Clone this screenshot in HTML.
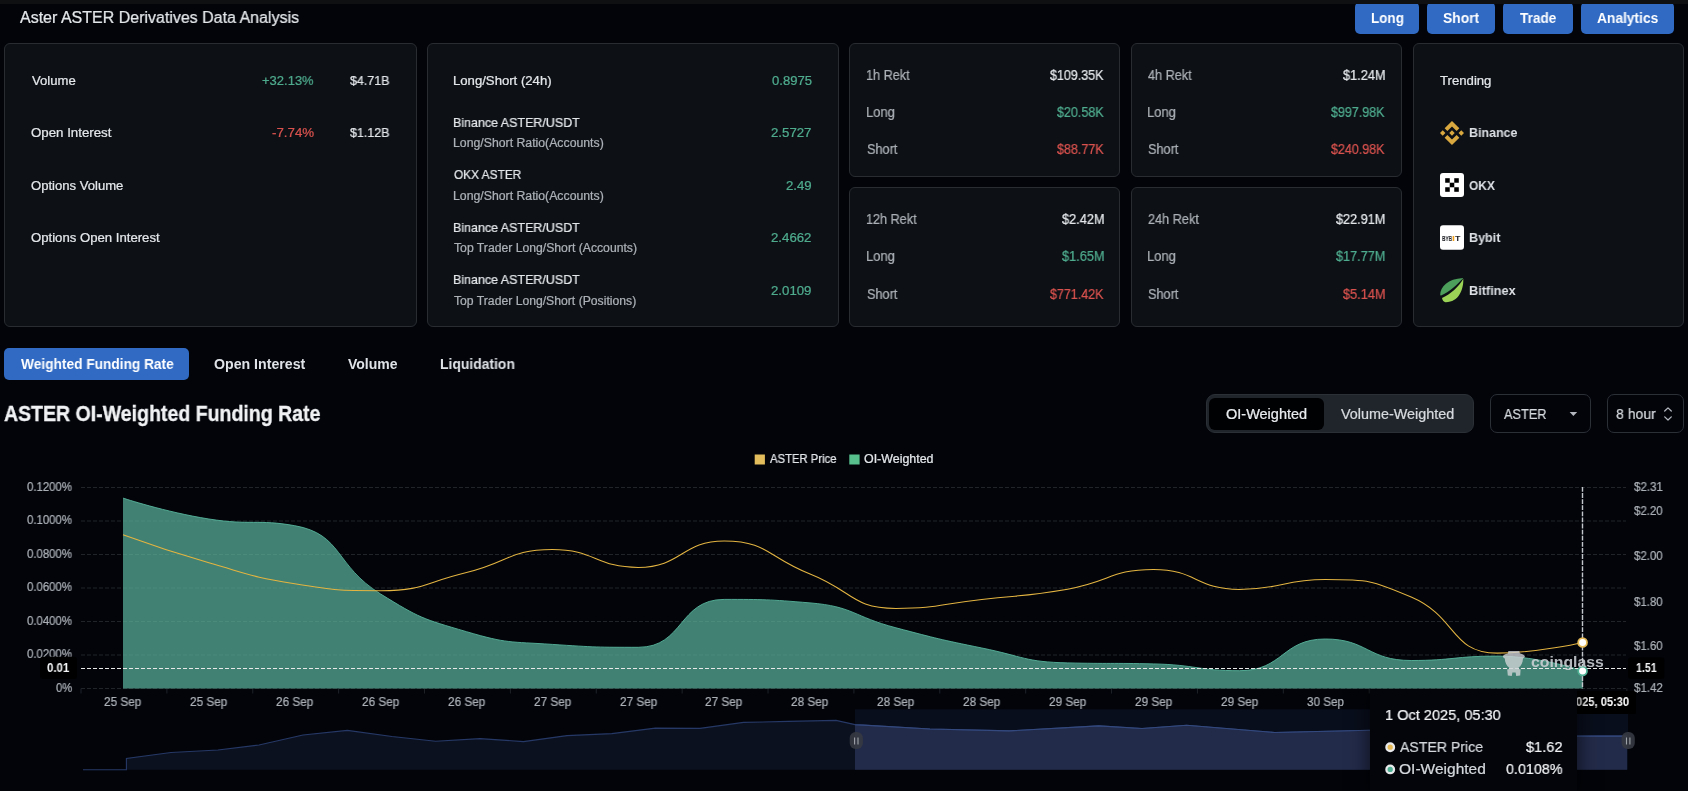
<!DOCTYPE html>
<html lang="en"><head><meta charset="utf-8"><title>Aster ASTER Derivatives Data Analysis</title>
<style>
html,body{margin:0;padding:0;background:#02040a;}
body{width:1688px;height:791px;position:relative;overflow:hidden;font-family:"Liberation Sans",sans-serif;}
.t{position:absolute;line-height:1;white-space:nowrap;will-change:transform;transform-origin:0 50%;}
.topbar{position:absolute;left:0;top:0;width:1688px;height:4px;background:#0f1011;z-index:5;}
.card{position:absolute;box-sizing:border-box;background:#0d1116;border:1px solid #292d32;border-radius:6px;}
.btn{position:absolute;top:2px;height:32px;background:#306ac3;border-radius:5px;}
.tab{position:absolute;left:4px;top:348px;width:185px;height:32px;background:#306ac3;border-radius:5px;}
.seg{position:absolute;left:1206px;top:394px;width:268px;height:39px;box-sizing:border-box;background:#20252c;border:1px solid #2b3037;border-radius:9px;}
.segon{position:absolute;left:1209px;top:398px;width:115px;height:32px;background:#000102;border-radius:6px;}
.sel{position:absolute;top:394px;height:39px;box-sizing:border-box;border:1px solid #2b3036;border-radius:7px;}
svg{position:absolute;left:0;top:0;}
.tip{position:absolute;left:1370px;top:689.5px;width:207px;height:102px;background:#03050b;box-shadow:0 0 16px 4px rgba(0,0,0,.5);clip-path:inset(0 -40px -40px -40px);}
</style></head><body>
<div class="topbar"></div>
<div class="btn" style="left:1355px;width:64px"></div>
<div class="btn" style="left:1427px;width:68px"></div>
<div class="btn" style="left:1503px;width:70px"></div>
<div class="btn" style="left:1581px;width:93px"></div>

<div class="card" style="left:4px;top:43px;width:413px;height:284px"></div>
<div class="card" style="left:427px;top:43px;width:412px;height:284px"></div>
<div class="card" style="left:849px;top:43px;width:271px;height:134px"></div>
<div class="card" style="left:849px;top:187px;width:271px;height:140px"></div>
<div class="card" style="left:1131px;top:43px;width:271px;height:134px"></div>
<div class="card" style="left:1131px;top:187px;width:271px;height:140px"></div>
<div class="card" style="left:1413px;top:43px;width:271px;height:284px"></div>

<div class="tab"></div>
<div class="seg"></div><div class="segon"></div>
<div class="sel" style="left:1490px;width:101px"></div>
<div class="sel" style="left:1607px;width:77px"></div>

<span class="t" style="left:26.76px;top:481px;transform:scaleX(0.9476);font-size:12px;color:#acb1b7;-webkit-text-stroke:0.24px;">0.1200%</span>
<span class="t" style="left:26.76px;top:514px;transform:scaleX(0.9476);font-size:12px;color:#acb1b7;-webkit-text-stroke:0.24px;">0.1000%</span>
<span class="t" style="left:26.76px;top:548px;transform:scaleX(0.9476);font-size:12px;color:#acb1b7;-webkit-text-stroke:0.24px;">0.0800%</span>
<span class="t" style="left:26.76px;top:581px;transform:scaleX(0.9476);font-size:12px;color:#acb1b7;-webkit-text-stroke:0.24px;">0.0600%</span>
<span class="t" style="left:26.76px;top:615px;transform:scaleX(0.9476);font-size:12px;color:#acb1b7;-webkit-text-stroke:0.24px;">0.0400%</span>
<span class="t" style="left:26.76px;top:648px;transform:scaleX(0.9476);font-size:12px;color:#acb1b7;-webkit-text-stroke:0.24px;">0.0200%</span>
<svg width="1688" height="791" viewBox="0 0 1688 791">

<g transform="translate(1440,121)" fill="#d9a93f">
<path d="M16.624 13.9202l2.7175 2.7154-7.353 7.353-7.353-7.352 2.7175-2.7164 4.6355 4.6595 4.6356-4.6595zm4.6366-4.6366L24 12l-2.7154 2.7164L18.5682 12l2.6924-2.7164zm-9.272.001l2.7163 2.6914-2.7164 2.7174v-.001L9.2721 12l2.7164-2.7154zm-9.2722-.001L5.4088 12l-2.6914 2.6924L0 12l2.7164-2.7164zM11.9885.0115l7.353 7.329-2.7174 2.7154-4.6356-4.6356-4.6355 4.6595-2.7174-2.7154 7.353-7.353z"/>
</g>
<g transform="translate(1440,173)">
<rect width="24" height="24" rx="3" fill="#ffffff"/>
<g fill="#000"><rect x="5.2" y="5.2" width="4.55" height="4.55"/><rect x="14.25" y="5.2" width="4.55" height="4.55"/><rect x="9.72" y="9.72" width="4.56" height="4.56"/><rect x="5.2" y="14.25" width="4.55" height="4.55"/><rect x="14.25" y="14.25" width="4.55" height="4.55"/></g>
</g>
<g transform="translate(1440,225.3)">
<rect width="24" height="24.4" rx="3" fill="#ffffff"/>
</g>
<g transform="translate(1440,277.8)">
<path d="M0.2,17 C0.2,9 8,0.9 22.9,0.1 C23.1,0.1 23.1,0.4 22.9,0.6 C17,6.8 9.5,14 1,17.7 C0.6,17.8 0.2,17.5 0.2,17 Z" fill="#4c9f5b"/>
<path d="M2,20.2 C10,17 18.8,9 23.3,1 C23.7,12 18.6,24.6 5.5,24.4 C3.8,24.3 2.5,22.8 2,20.2 Z" fill="#9bd357"/>
</g>

<path d="M1569.6,411.9 L1577.2,411.9 L1573.4,415.9 Z" fill="#b4b8be"/>
<path d="M1664.7,411 L1668,407.9 L1671.3,411 M1664.7,416.9 L1668,420 L1671.3,416.9" fill="none" stroke="#b4b8be" stroke-width="1.3" stroke-linecap="round" stroke-linejoin="round"/>
<rect x="754.7" y="454.5" width="10.2" height="10" fill="#e3bc5b"/>
<rect x="849.3" y="454.5" width="10.3" height="10" fill="#57c08d"/>
<line x1="81" y1="487.5" x2="1626" y2="487.5" stroke="#212529" stroke-width="1" stroke-dasharray="4 2"/>
<line x1="81" y1="521.0" x2="1626" y2="521.0" stroke="#212529" stroke-width="1" stroke-dasharray="4 2"/>
<line x1="81" y1="554.5" x2="1626" y2="554.5" stroke="#212529" stroke-width="1" stroke-dasharray="4 2"/>
<line x1="81" y1="588.0" x2="1626" y2="588.0" stroke="#212529" stroke-width="1" stroke-dasharray="4 2"/>
<line x1="81" y1="621.5" x2="1626" y2="621.5" stroke="#212529" stroke-width="1" stroke-dasharray="4 2"/>
<line x1="81" y1="655.0" x2="1626" y2="655.0" stroke="#212529" stroke-width="1" stroke-dasharray="4 2"/>
<line x1="81" y1="688.5" x2="1626" y2="688.5" stroke="#212529" stroke-width="1" stroke-dasharray="4 2"/>
<line x1="81.00" y1="688.5" x2="81.00" y2="693.5" stroke="#1f2328" stroke-width="1"/>
<line x1="166.88" y1="688.5" x2="166.88" y2="693.5" stroke="#1f2328" stroke-width="1"/>
<line x1="252.76" y1="688.5" x2="252.76" y2="693.5" stroke="#1f2328" stroke-width="1"/>
<line x1="338.64" y1="688.5" x2="338.64" y2="693.5" stroke="#1f2328" stroke-width="1"/>
<line x1="424.52" y1="688.5" x2="424.52" y2="693.5" stroke="#1f2328" stroke-width="1"/>
<line x1="510.40" y1="688.5" x2="510.40" y2="693.5" stroke="#1f2328" stroke-width="1"/>
<line x1="596.28" y1="688.5" x2="596.28" y2="693.5" stroke="#1f2328" stroke-width="1"/>
<line x1="682.16" y1="688.5" x2="682.16" y2="693.5" stroke="#1f2328" stroke-width="1"/>
<line x1="768.04" y1="688.5" x2="768.04" y2="693.5" stroke="#1f2328" stroke-width="1"/>
<line x1="853.92" y1="688.5" x2="853.92" y2="693.5" stroke="#1f2328" stroke-width="1"/>
<line x1="939.80" y1="688.5" x2="939.80" y2="693.5" stroke="#1f2328" stroke-width="1"/>
<line x1="1025.68" y1="688.5" x2="1025.68" y2="693.5" stroke="#1f2328" stroke-width="1"/>
<line x1="1111.56" y1="688.5" x2="1111.56" y2="693.5" stroke="#1f2328" stroke-width="1"/>
<line x1="1197.44" y1="688.5" x2="1197.44" y2="693.5" stroke="#1f2328" stroke-width="1"/>
<line x1="1283.32" y1="688.5" x2="1283.32" y2="693.5" stroke="#1f2328" stroke-width="1"/>
<line x1="1369.20" y1="688.5" x2="1369.20" y2="693.5" stroke="#1f2328" stroke-width="1"/>
<line x1="1455.08" y1="688.5" x2="1455.08" y2="693.5" stroke="#1f2328" stroke-width="1"/>
<line x1="1540.96" y1="688.5" x2="1540.96" y2="693.5" stroke="#1f2328" stroke-width="1"/>
<line x1="1626.84" y1="688.5" x2="1626.84" y2="693.5" stroke="#1f2328" stroke-width="1"/>
<path d="M123.00,498.10 C123.00,498.10 165.39,512.13 208.88,519.00 C251.27,525.70 256.99,519.00 294.76,525.70 C342.87,534.23 334.34,565.42 380.64,594.00 C420.22,618.42 421.92,618.61 466.52,631.70 C507.80,643.81 509.24,641.47 552.40,644.40 C595.12,647.30 598.23,647.30 638.28,647.30 C684.11,647.30 678.33,599.40 724.16,599.40 C764.21,599.40 767.95,599.40 810.04,602.90 C853.83,606.54 852.69,616.45 895.92,627.80 C938.57,639.00 938.60,639.17 981.80,648.00 C1024.48,656.72 1024.42,661.89 1067.68,662.90 C1110.30,663.90 1110.69,662.90 1153.56,663.90 C1196.57,664.90 1197.80,670.70 1239.44,670.70 C1283.68,670.70 1281.66,639.00 1325.32,639.00 C1367.54,639.00 1367.64,660.50 1411.20,660.50 C1453.52,660.50 1454.43,656.10 1497.08,656.10 C1540.31,656.10 1582.96,671.00 1582.96,671.00 L1582.96,688.5 L123.00,688.5 Z" fill="#5cb79f" fill-opacity="0.7"/>
<path d="M123.00,498.10 C123.00,498.10 165.39,512.13 208.88,519.00 C251.27,525.70 256.99,519.00 294.76,525.70 C342.87,534.23 334.34,565.42 380.64,594.00 C420.22,618.42 421.92,618.61 466.52,631.70 C507.80,643.81 509.24,641.47 552.40,644.40 C595.12,647.30 598.23,647.30 638.28,647.30 C684.11,647.30 678.33,599.40 724.16,599.40 C764.21,599.40 767.95,599.40 810.04,602.90 C853.83,606.54 852.69,616.45 895.92,627.80 C938.57,639.00 938.60,639.17 981.80,648.00 C1024.48,656.72 1024.42,661.89 1067.68,662.90 C1110.30,663.90 1110.69,662.90 1153.56,663.90 C1196.57,664.90 1197.80,670.70 1239.44,670.70 C1283.68,670.70 1281.66,639.00 1325.32,639.00 C1367.54,639.00 1367.64,660.50 1411.20,660.50 C1453.52,660.50 1454.43,656.10 1497.08,656.10 C1540.31,656.10 1582.96,671.00 1582.96,671.00" fill="none" stroke="#56b59c" stroke-opacity="0.9" stroke-width="1"/>
<path d="M123.00,534.80 C123.00,534.80 165.48,550.42 208.88,562.80 C251.36,574.92 251.27,576.73 294.76,583.80 C337.15,590.68 338.10,590.70 380.64,590.70 C423.98,590.70 423.86,582.76 466.52,572.50 C509.74,562.11 509.17,549.40 552.40,549.40 C595.05,549.40 595.85,567.40 638.28,567.40 C681.73,567.40 681.73,540.90 724.16,540.90 C767.61,540.90 767.21,557.17 810.04,574.00 C853.09,590.92 851.50,608.40 895.92,608.40 C937.38,608.40 938.89,604.20 981.80,599.40 C1024.77,594.60 1025.14,596.61 1067.68,589.20 C1111.02,581.66 1110.63,569.50 1153.56,569.50 C1196.51,569.50 1196.08,589.40 1239.44,589.40 C1281.96,589.40 1282.68,579.50 1325.32,579.50 C1368.56,579.50 1371.63,580.04 1411.20,597.00 C1457.51,616.84 1450.50,653.10 1497.08,653.10 C1536.38,653.10 1582.96,642.50 1582.96,642.50" fill="none" stroke="#e3b441" stroke-width="1.05"/>
<line x1="81" y1="668.5" x2="1626" y2="668.5" stroke="#e8e8e8" stroke-width="1" stroke-dasharray="4 2"/>
<rect x="40" y="656.7" width="37" height="22.3" rx="3" fill="#000000"/>
<rect x="1628" y="657.3" width="36.5" height="21.6" rx="3" fill="#000000"/>
<path d="M83.0,769.7 L126.4,769.7 L126.4,758.5 L171.0,752.5 L218.0,750.0 L259.0,745.0 L303.0,735.0 L347.4,730.4 L392.0,736.5 L435.7,741.3 L480.0,738.6 L523.4,741.6 L567.0,735.6 L611.8,733.6 L655.3,728.1 L700.0,728.4 L743.6,722.4 L788.4,721.4 L836.0,720.4 L855.0,724.6 L930.0,729.0 L1009.2,730.9 L1098.8,725.9 L1142.0,728.5 L1186.7,725.2 L1274.6,732.5 L1370.0,730.2 L1450.0,733.0 L1540.0,735.5 L1577.0,736.1 L1627.0,736.1 L1627,769.7 L83,769.7 Z" fill="#0c1120"/>
<clipPath id="cw"><rect x="855" y="700" width="773" height="80"/></clipPath>
<rect x="855" y="709.3" width="773" height="60.4" fill="#090e1c"/>
<path d="M83.0,769.7 L126.4,769.7 L126.4,758.5 L171.0,752.5 L218.0,750.0 L259.0,745.0 L303.0,735.0 L347.4,730.4 L392.0,736.5 L435.7,741.3 L480.0,738.6 L523.4,741.6 L567.0,735.6 L611.8,733.6 L655.3,728.1 L700.0,728.4 L743.6,722.4 L788.4,721.4 L836.0,720.4 L855.0,724.6 L930.0,729.0 L1009.2,730.9 L1098.8,725.9 L1142.0,728.5 L1186.7,725.2 L1274.6,732.5 L1370.0,730.2 L1450.0,733.0 L1540.0,735.5 L1577.0,736.1 L1627.0,736.1 L1627,769.7 L83,769.7 Z" fill="#232b4a" clip-path="url(#cw)"/>
<path d="M83.0,769.7 L126.4,769.7 L126.4,758.5 L171.0,752.5 L218.0,750.0 L259.0,745.0 L303.0,735.0 L347.4,730.4 L392.0,736.5 L435.7,741.3 L480.0,738.6 L523.4,741.6 L567.0,735.6 L611.8,733.6 L655.3,728.1 L700.0,728.4 L743.6,722.4 L788.4,721.4 L836.0,720.4 L855.0,724.6 L930.0,729.0 L1009.2,730.9 L1098.8,725.9 L1142.0,728.5 L1186.7,725.2 L1274.6,732.5 L1370.0,730.2 L1450.0,733.0 L1540.0,735.5 L1577.0,736.1 L1627.0,736.1" fill="none" stroke="#263966" stroke-width="1.1"/>
<path d="M83.0,769.7 L126.4,769.7 L126.4,758.5 L171.0,752.5 L218.0,750.0 L259.0,745.0 L303.0,735.0 L347.4,730.4 L392.0,736.5 L435.7,741.3 L480.0,738.6 L523.4,741.6 L567.0,735.6 L611.8,733.6 L655.3,728.1 L700.0,728.4 L743.6,722.4 L788.4,721.4 L836.0,720.4 L855.0,724.6 L930.0,729.0 L1009.2,730.9 L1098.8,725.9 L1142.0,728.5 L1186.7,725.2 L1274.6,732.5 L1370.0,730.2 L1450.0,733.0 L1540.0,735.5 L1577.0,736.1 L1627.0,736.1" fill="none" stroke="#34497e" stroke-width="1.1" clip-path="url(#cw)"/>
<rect x="849.6999999999999" y="732" width="13.2" height="17" rx="6" fill="#363a41" fill-opacity="0.9"/>
<path d="M854.5999999999999,737.5 V744.5 M858.0,737.5 V744.5" stroke="#9fa4aa" stroke-width="1.1"/>
<rect x="1621.6000000000001" y="732" width="13.2" height="17" rx="6" fill="#363a41" fill-opacity="0.9"/>
<path d="M1626.5,737.5 V744.5 M1629.9,737.5 V744.5" stroke="#9fa4aa" stroke-width="1.1"/>
<line x1="1582.5" y1="487" x2="1582.5" y2="688.5" stroke="#c3c7cb" stroke-width="1.4" stroke-dasharray="4.8 1.3"/>
<circle cx="1582.6" cy="642.5" r="4.4" fill="#ffffff" stroke="#e6bb57" stroke-width="1.8"/>
<circle cx="1582.6" cy="671" r="4.4" fill="#ffffff" stroke="#4fb094" stroke-width="1.8"/>
<g fill="#cfd3d7" fill-opacity="0.8">
<path d="M1508.3,651 L1519.4,651 L1519.8,653.2 C1523,654 1524.9,655.3 1524.9,656.6 C1524.9,657.3 1524.2,657.9 1523,658.4 C1522.9,662.5 1521,666 1518.6,667.6 L1518.6,669 L1520.6,669.6 L1520.2,675.6 L1516.2,675.9 L1515.6,672.6 L1512.4,672.6 L1511.8,675.9 L1507.8,675.6 L1507.2,669.6 L1509.2,669 L1509.2,667.6 C1506.8,666 1504.9,662.5 1504.8,658.4 C1503.6,657.9 1502.9,657.3 1502.9,656.6 C1502.9,655.3 1504.8,654 1508,653.2 Z"/>
</g>
<rect x="1531.5" y="691" width="104.5" height="23" rx="2" fill="#000000"/>
</svg>
<span class="t" style="left:19.60px;top:10px;transform:scaleX(0.9991);font-size:16px;color:#e4e7ea;-webkit-text-stroke:0.24px;">Aster ASTER Derivatives Data Analysis</span>
<span class="t" style="left:1371.04px;top:11px;transform:scaleX(0.9612);font-size:14px;color:#ffffff;font-weight:700;">Long</span>
<span class="t" style="left:1443.01px;top:11px;transform:scaleX(0.9861);font-size:14px;color:#ffffff;font-weight:700;">Short</span>
<span class="t" style="left:1520.40px;top:11px;transform:scaleX(0.9730);font-size:14px;color:#ffffff;font-weight:700;">Trade</span>
<span class="t" style="left:1596.75px;top:11px;transform:scaleX(0.9837);font-size:14px;color:#ffffff;font-weight:700;">Analytics</span>
<span class="t" style="left:31.60px;top:74px;transform:scaleX(1.0070);font-size:13px;color:#e4e7ea;-webkit-text-stroke:0.24px;">Volume</span>
<span class="t" style="left:262.20px;top:74px;transform:scaleX(0.9970);font-size:13px;color:#4fac8e;-webkit-text-stroke:0.24px;">+32.13%</span>
<span class="t" style="left:349.50px;top:74px;transform:scaleX(0.9595);font-size:13px;color:#e4e7ea;-webkit-text-stroke:0.24px;">$4.71B</span>
<span class="t" style="left:31.09px;top:126px;transform:scaleX(1.0211);font-size:13px;color:#e4e7ea;-webkit-text-stroke:0.24px;">Open Interest</span>
<span class="t" style="left:271.59px;top:126px;transform:scaleX(1.0236);font-size:13px;color:#d9524e;-webkit-text-stroke:0.24px;">-7.74%</span>
<span class="t" style="left:349.50px;top:126px;transform:scaleX(0.9595);font-size:13px;color:#e4e7ea;-webkit-text-stroke:0.24px;">$1.12B</span>
<span class="t" style="left:31.10px;top:179px;transform:scaleX(1.0061);font-size:13px;color:#e4e7ea;-webkit-text-stroke:0.24px;">Options Volume</span>
<span class="t" style="left:31.09px;top:231px;transform:scaleX(1.0114);font-size:13px;color:#e4e7ea;-webkit-text-stroke:0.24px;">Options Open Interest</span>
<span class="t" style="left:453.09px;top:74px;transform:scaleX(1.0104);font-size:13px;color:#e4e7ea;-webkit-text-stroke:0.24px;">Long/Short (24h)</span>
<span class="t" style="left:771.75px;top:74px;transform:scaleX(1.0038);font-size:13px;color:#4fac8e;-webkit-text-stroke:0.24px;">0.8975</span>
<span class="t" style="left:453.14px;top:116px;transform:scaleX(0.9588);font-size:13px;color:#e4e7ea;-webkit-text-stroke:0.24px;">Binance ASTER/USDT</span>
<span class="t" style="left:453.33px;top:137px;transform:scaleX(1.0226);font-size:12px;color:#acb1b7;-webkit-text-stroke:0.24px;">Long/Short Ratio(Accounts)</span>
<span class="t" style="left:771.49px;top:126px;transform:scaleX(1.0168);font-size:13px;color:#4fac8e;-webkit-text-stroke:0.24px;">2.5727</span>
<span class="t" style="left:453.64px;top:168px;transform:scaleX(0.9127);font-size:13px;color:#e4e7ea;-webkit-text-stroke:0.24px;">OKX ASTER</span>
<span class="t" style="left:453.33px;top:190px;transform:scaleX(1.0226);font-size:12px;color:#acb1b7;-webkit-text-stroke:0.24px;">Long/Short Ratio(Accounts)</span>
<span class="t" style="left:786.29px;top:179px;transform:scaleX(1.0144);font-size:13px;color:#4fac8e;-webkit-text-stroke:0.24px;">2.49</span>
<span class="t" style="left:453.14px;top:221px;transform:scaleX(0.9588);font-size:13px;color:#e4e7ea;-webkit-text-stroke:0.24px;">Binance ASTER/USDT</span>
<span class="t" style="left:454.10px;top:242px;transform:scaleX(1.0162);font-size:12px;color:#acb1b7;-webkit-text-stroke:0.24px;">Top Trader Long/Short (Accounts)</span>
<span class="t" style="left:771.49px;top:231px;transform:scaleX(1.0168);font-size:13px;color:#4fac8e;-webkit-text-stroke:0.24px;">2.4662</span>
<span class="t" style="left:453.14px;top:273px;transform:scaleX(0.9588);font-size:13px;color:#e4e7ea;-webkit-text-stroke:0.24px;">Binance ASTER/USDT</span>
<span class="t" style="left:454.10px;top:295px;transform:scaleX(1.0154);font-size:12px;color:#acb1b7;-webkit-text-stroke:0.24px;">Top Trader Long/Short (Positions)</span>
<span class="t" style="left:771.49px;top:284px;transform:scaleX(1.0168);font-size:13px;color:#4fac8e;-webkit-text-stroke:0.24px;">2.0109</span>
<span class="t" style="left:866.09px;top:68px;transform:scaleX(0.9058);font-size:14px;color:#acb1b7;-webkit-text-stroke:0.24px;">1h Rekt</span>
<span class="t" style="left:1049.80px;top:68px;transform:scaleX(0.8933);font-size:14px;color:#e4e7ea;-webkit-text-stroke:0.24px;">$109.35K</span>
<span class="t" style="left:866.07px;top:105px;transform:scaleX(0.9288);font-size:14px;color:#acb1b7;-webkit-text-stroke:0.24px;">Long</span>
<span class="t" style="left:1056.60px;top:105px;transform:scaleX(0.8957);font-size:14px;color:#4fac8e;-webkit-text-stroke:0.24px;">$20.58K</span>
<span class="t" style="left:866.55px;top:142px;transform:scaleX(0.9091);font-size:14px;color:#acb1b7;-webkit-text-stroke:0.24px;">Short</span>
<span class="t" style="left:1056.60px;top:142px;transform:scaleX(0.8957);font-size:14px;color:#d9524e;-webkit-text-stroke:0.24px;">$88.77K</span>
<span class="t" style="left:866.10px;top:212px;transform:scaleX(0.9018);font-size:14px;color:#acb1b7;-webkit-text-stroke:0.24px;">12h Rekt</span>
<span class="t" style="left:1061.70px;top:212px;transform:scaleX(0.9115);font-size:14px;color:#e4e7ea;-webkit-text-stroke:0.24px;">$2.42M</span>
<span class="t" style="left:866.07px;top:249px;transform:scaleX(0.9288);font-size:14px;color:#acb1b7;-webkit-text-stroke:0.24px;">Long</span>
<span class="t" style="left:1061.70px;top:249px;transform:scaleX(0.9115);font-size:14px;color:#4fac8e;-webkit-text-stroke:0.24px;">$1.65M</span>
<span class="t" style="left:866.55px;top:287px;transform:scaleX(0.9091);font-size:14px;color:#acb1b7;-webkit-text-stroke:0.24px;">Short</span>
<span class="t" style="left:1049.80px;top:287px;transform:scaleX(0.8933);font-size:14px;color:#d9524e;-webkit-text-stroke:0.24px;">$771.42K</span>
<span class="t" style="left:1147.87px;top:68px;transform:scaleX(0.9062);font-size:14px;color:#acb1b7;-webkit-text-stroke:0.24px;">4h Rekt</span>
<span class="t" style="left:1342.80px;top:68px;transform:scaleX(0.9115);font-size:14px;color:#e4e7ea;-webkit-text-stroke:0.24px;">$1.24M</span>
<span class="t" style="left:1147.17px;top:105px;transform:scaleX(0.9288);font-size:14px;color:#acb1b7;-webkit-text-stroke:0.24px;">Long</span>
<span class="t" style="left:1330.90px;top:105px;transform:scaleX(0.8933);font-size:14px;color:#4fac8e;-webkit-text-stroke:0.24px;">$997.98K</span>
<span class="t" style="left:1147.65px;top:142px;transform:scaleX(0.9091);font-size:14px;color:#acb1b7;-webkit-text-stroke:0.24px;">Short</span>
<span class="t" style="left:1330.90px;top:142px;transform:scaleX(0.8933);font-size:14px;color:#d9524e;-webkit-text-stroke:0.24px;">$240.98K</span>
<span class="t" style="left:1147.65px;top:212px;transform:scaleX(0.9063);font-size:14px;color:#acb1b7;-webkit-text-stroke:0.24px;">24h Rekt</span>
<span class="t" style="left:1336.00px;top:212px;transform:scaleX(0.9065);font-size:14px;color:#e4e7ea;-webkit-text-stroke:0.24px;">$22.91M</span>
<span class="t" style="left:1147.17px;top:249px;transform:scaleX(0.9288);font-size:14px;color:#acb1b7;-webkit-text-stroke:0.24px;">Long</span>
<span class="t" style="left:1336.00px;top:249px;transform:scaleX(0.9065);font-size:14px;color:#4fac8e;-webkit-text-stroke:0.24px;">$17.77M</span>
<span class="t" style="left:1147.65px;top:287px;transform:scaleX(0.9091);font-size:14px;color:#acb1b7;-webkit-text-stroke:0.24px;">Short</span>
<span class="t" style="left:1342.80px;top:287px;transform:scaleX(0.9115);font-size:14px;color:#d9524e;-webkit-text-stroke:0.24px;">$5.14M</span>
<span class="t" style="left:1439.55px;top:74px;transform:scaleX(1.0120);font-size:13px;color:#e4e7ea;-webkit-text-stroke:0.24px;">Trending</span>
<span class="t" style="left:1468.78px;top:126px;transform:scaleX(0.9584);font-size:13px;color:#dde1e6;font-weight:700;">Binance</span>
<span class="t" style="left:1469.04px;top:179px;transform:scaleX(0.9200);font-size:13px;color:#dde1e6;font-weight:700;">OKX</span>
<span class="t" style="left:1468.77px;top:231px;transform:scaleX(0.9669);font-size:13px;color:#dde1e6;font-weight:700;">Bybit</span>
<span class="t" style="left:1468.77px;top:284px;transform:scaleX(0.9775);font-size:13px;color:#dde1e6;font-weight:700;">Bitfinex</span>
<span class="t" style="left:20.50px;top:357px;transform:scaleX(0.9788);font-size:14px;color:#ffffff;font-weight:700;">Weighted Funding Rate</span>
<span class="t" style="left:214.49px;top:357px;transform:scaleX(1.0112);font-size:14px;color:#dfe3e7;font-weight:700;">Open Interest</span>
<span class="t" style="left:348.45px;top:357px;transform:scaleX(0.9969);font-size:14px;color:#dfe3e7;font-weight:700;">Volume</span>
<span class="t" style="left:439.51px;top:357px;transform:scaleX(0.9918);font-size:14px;color:#dfe3e7;font-weight:700;">Liquidation</span>
<span class="t" style="left:4.17px;top:404px;transform:scaleX(0.9082);font-size:21.5px;color:#f0f2f4;font-weight:700;-webkit-text-stroke:0.35px;">ASTER OI-Weighted Funding Rate</span>
<span class="t" style="left:1225.79px;top:407px;transform:scaleX(1.0218);font-size:14.2px;color:#e8ebee;-webkit-text-stroke:0.24px;">OI-Weighted</span>
<span class="t" style="left:1341.00px;top:407px;transform:scaleX(1.0126);font-size:14.2px;color:#d6dade;-webkit-text-stroke:0.24px;">Volume-Weighted</span>
<span class="t" style="left:1503.60px;top:406px;transform:scaleX(0.8216);font-size:15.5px;color:#d6dade;-webkit-text-stroke:0.24px;">ASTER</span>
<span class="t" style="left:1616.35px;top:406px;transform:scaleX(0.9064);font-size:15.5px;color:#d6dade;-webkit-text-stroke:0.24px;">8 hour</span>
<span class="t" style="left:769.90px;top:453px;transform:scaleX(0.9409);font-size:12px;color:#e4e7ea;-webkit-text-stroke:0.24px;">ASTER Price</span>
<span class="t" style="left:864.28px;top:453px;transform:scaleX(1.0348);font-size:12px;color:#e4e7ea;-webkit-text-stroke:0.24px;">OI-Weighted</span>
<span class="t" style="left:55.57px;top:682px;transform:scaleX(0.9254);font-size:12px;color:#acb1b7;-webkit-text-stroke:0.24px;">0%</span>
<span class="t" style="left:1634.00px;top:481px;transform:scaleX(0.9627);font-size:12px;color:#acb1b7;-webkit-text-stroke:0.24px;">$2.31</span>
<span class="t" style="left:1634.00px;top:505px;transform:scaleX(0.9546);font-size:12px;color:#acb1b7;-webkit-text-stroke:0.24px;">$2.20</span>
<span class="t" style="left:1634.00px;top:550px;transform:scaleX(0.9546);font-size:12px;color:#acb1b7;-webkit-text-stroke:0.24px;">$2.00</span>
<span class="t" style="left:1634.00px;top:596px;transform:scaleX(0.9546);font-size:12px;color:#acb1b7;-webkit-text-stroke:0.24px;">$1.80</span>
<span class="t" style="left:1634.00px;top:640px;transform:scaleX(0.9546);font-size:12px;color:#acb1b7;-webkit-text-stroke:0.24px;">$1.60</span>
<span class="t" style="left:1634.00px;top:682px;transform:scaleX(0.9627);font-size:12px;color:#acb1b7;-webkit-text-stroke:0.24px;">$1.42</span>
<span class="t" style="left:104.26px;top:696px;transform:scaleX(0.9799);font-size:12px;color:#acb1b7;-webkit-text-stroke:0.24px;">25 Sep</span>
<span class="t" style="left:190.14px;top:696px;transform:scaleX(0.9799);font-size:12px;color:#acb1b7;-webkit-text-stroke:0.24px;">25 Sep</span>
<span class="t" style="left:276.02px;top:696px;transform:scaleX(0.9799);font-size:12px;color:#acb1b7;-webkit-text-stroke:0.24px;">26 Sep</span>
<span class="t" style="left:361.90px;top:696px;transform:scaleX(0.9799);font-size:12px;color:#acb1b7;-webkit-text-stroke:0.24px;">26 Sep</span>
<span class="t" style="left:447.78px;top:696px;transform:scaleX(0.9799);font-size:12px;color:#acb1b7;-webkit-text-stroke:0.24px;">26 Sep</span>
<span class="t" style="left:533.66px;top:696px;transform:scaleX(0.9799);font-size:12px;color:#acb1b7;-webkit-text-stroke:0.24px;">27 Sep</span>
<span class="t" style="left:619.54px;top:696px;transform:scaleX(0.9799);font-size:12px;color:#acb1b7;-webkit-text-stroke:0.24px;">27 Sep</span>
<span class="t" style="left:705.42px;top:696px;transform:scaleX(0.9799);font-size:12px;color:#acb1b7;-webkit-text-stroke:0.24px;">27 Sep</span>
<span class="t" style="left:791.30px;top:696px;transform:scaleX(0.9799);font-size:12px;color:#acb1b7;-webkit-text-stroke:0.24px;">28 Sep</span>
<span class="t" style="left:877.18px;top:696px;transform:scaleX(0.9799);font-size:12px;color:#acb1b7;-webkit-text-stroke:0.24px;">28 Sep</span>
<span class="t" style="left:963.06px;top:696px;transform:scaleX(0.9799);font-size:12px;color:#acb1b7;-webkit-text-stroke:0.24px;">28 Sep</span>
<span class="t" style="left:1048.94px;top:696px;transform:scaleX(0.9799);font-size:12px;color:#acb1b7;-webkit-text-stroke:0.24px;">29 Sep</span>
<span class="t" style="left:1134.82px;top:696px;transform:scaleX(0.9799);font-size:12px;color:#acb1b7;-webkit-text-stroke:0.24px;">29 Sep</span>
<span class="t" style="left:1220.70px;top:696px;transform:scaleX(0.9799);font-size:12px;color:#acb1b7;-webkit-text-stroke:0.24px;">29 Sep</span>
<span class="t" style="left:1306.83px;top:696px;transform:scaleX(0.9733);font-size:12px;color:#acb1b7;-webkit-text-stroke:0.24px;">30 Sep</span>
<span class="t" style="left:1442.24px;top:236px;transform:scaleX(0.7245);font-size:6.6px;color:#1b1d22;font-weight:700;">BYB</span>
<span class="t" style="left:1451.80px;top:236px;transform:scaleX(1.6000);font-size:6.6px;color:#f2a31b;font-weight:700;">I</span>
<span class="t" style="left:1455.40px;top:236px;transform:scaleX(1.3500);font-size:6.6px;color:#1b1d22;font-weight:700;">T</span>
<span class="t" style="left:47.02px;top:662px;transform:scaleX(0.9511);font-size:12px;color:#f4f5f6;font-weight:700;">0.01</span>
<span class="t" style="left:1635.74px;top:662px;transform:scaleX(0.8854);font-size:12px;color:#f4f5f6;font-weight:700;">1.51</span>
<span class="t" style="left:1530.69px;top:654px;transform:scaleX(1.0184);font-size:15.5px;color:#cdd1d5;font-weight:700;opacity:.88;">coinglass</span>
<span class="t" style="left:1539.11px;top:696px;transform:scaleX(0.9247);font-size:12px;color:#ffffff;font-weight:700;">1 Oct 2025, 05:30</span>
<div class="tip"></div>
<svg width="1688" height="791" viewBox="0 0 1688 791">
<circle cx="1390.2" cy="747.2" r="3.8" fill="#e6bb57" stroke="#e9eaec" stroke-width="2.3"/>
<circle cx="1390.2" cy="769.4" r="3.8" fill="#4fb094" stroke="#e9eaec" stroke-width="2.3"/>
</svg>
<span class="t" style="left:1385.46px;top:707px;transform:scaleX(0.9396);font-size:15.5px;color:#f2f4f6;-webkit-text-stroke:0.24px;">1 Oct 2025, 05:30</span>
<span class="t" style="left:1399.80px;top:739px;transform:scaleX(0.9091);font-size:15.5px;color:#d4d8dc;-webkit-text-stroke:0.24px;">ASTER Price</span>
<span class="t" style="left:1525.60px;top:739px;transform:scaleX(0.9412);font-size:15.5px;color:#f2f4f6;-webkit-text-stroke:0.24px;">$1.62</span>
<span class="t" style="left:1399.30px;top:761px;transform:scaleX(1.0012);font-size:15.5px;color:#d4d8dc;-webkit-text-stroke:0.24px;">OI-Weighted</span>
<span class="t" style="left:1505.54px;top:761px;transform:scaleX(0.9228);font-size:15.5px;color:#f2f4f6;-webkit-text-stroke:0.24px;">0.0108%</span>
</body></html>
